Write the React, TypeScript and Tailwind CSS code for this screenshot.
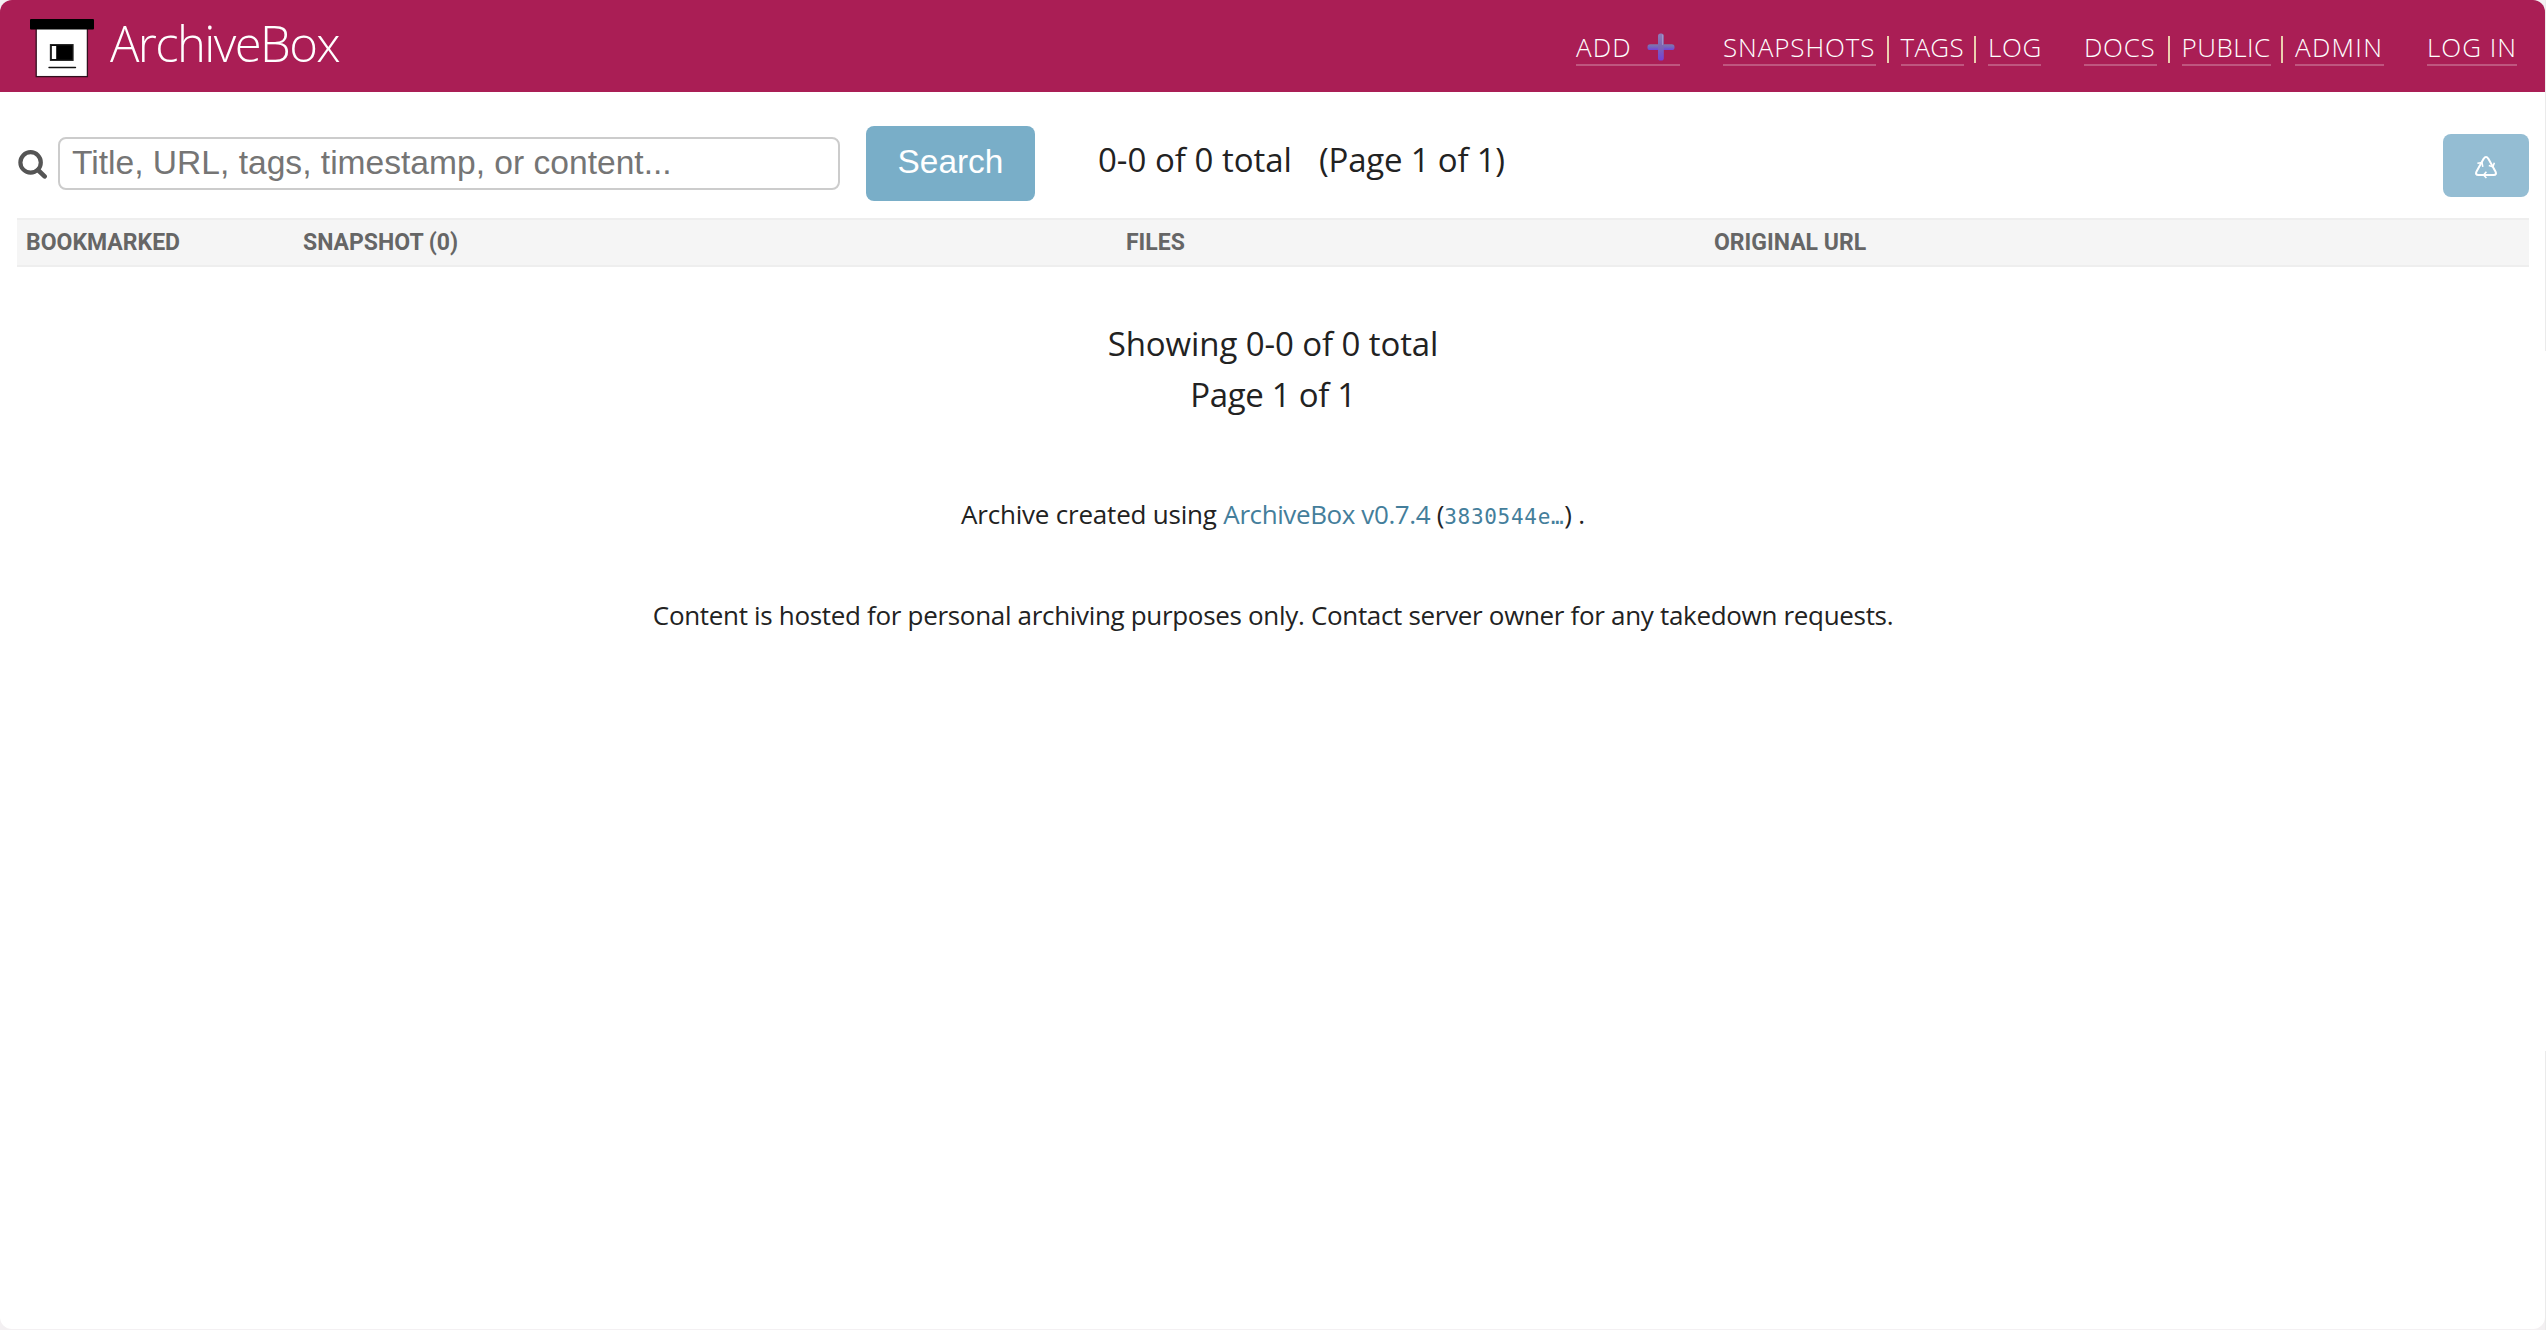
type NavLink = { label: string; box: string };

const snapshotLinks: NavLink[] = [
  { label: "SNAPSHOTS", box: "w-[153px] tracking-[0.9px]" },
  { label: "TAGS", box: "w-[63px] tracking-[0.3px]" },
  { label: "LOG", box: "w-[53px] tracking-[0.6px]" },
];

const siteLinks: NavLink[] = [
  { label: "DOCS", box: "w-[73px] tracking-[0.7px]" },
  { label: "PUBLIC", box: "w-[89px] tracking-[0.5px]" },
  { label: "ADMIN", box: "w-[89px] tracking-[1.3px]" },
];

const columns = [
  { label: "BOOKMARKED", width: "w-[277px]" },
  { label: "SNAPSHOT (0)", width: "w-[823px]" },
  { label: "FILES", width: "w-[588px]" },
  { label: "ORIGINAL URL", width: "flex-1" },
];

const linkClasses =
  "block h-9 border-b-2 border-white/25 leading-[34px] whitespace-nowrap";

const Logo = () => (
  <svg width="66" height="62" viewBox="0 0 66 62" className="mt-[17px] shrink-0">
    <rect x="7.2" y="11" width="51.2" height="48.6" fill="#fff" stroke="#32101f" strokeWidth="1.3" />
    <rect x="1" y="2" width="64" height="10.4" rx="1" fill="#000" />
    <rect x="21.5" y="27.7" width="22.5" height="15.6" fill="#000" stroke="#222" strokeWidth="1.3" />
    <rect x="22.8" y="29" width="4.4" height="13" fill="#fff" />
    <path d="M20 50.5H46.5" stroke="#111" strokeWidth="1.4" strokeLinecap="round" />
  </svg>
);

const PlusIcon = () => (
  <svg width="28" height="28" viewBox="0 0 28 28" className="shrink-0">
    <defs>
      <linearGradient id="plus" x1="0" y1="0" x2="0" y2="1">
        <stop offset="0" stopColor="#8f7bb8" />
        <stop offset="0.5" stopColor="#7b66b4" />
        <stop offset="1" stopColor="#7440d8" />
      </linearGradient>
      <linearGradient id="plus-bar" x1="0" y1="0" x2="0" y2="1">
        <stop offset="0" stopColor="#7d79ac" />
        <stop offset="0.5" stopColor="#7763bd" />
        <stop offset="1" stopColor="#7240dc" />
      </linearGradient>
    </defs>
    <rect x="0.5" y="11.3" width="27" height="5.8" rx="2.6" fill="url(#plus-bar)" />
    <rect x="11" y="0.5" width="5.8" height="27" rx="2.6" fill="url(#plus)" />
    <path d="M15.6 2v9.5" stroke="#a79aca" strokeWidth="0.9" strokeLinecap="round" />
  </svg>
);

const SearchIcon = () => (
  <svg width="30" height="30" viewBox="0 0 30 30" className="mt-[57px] shrink-0">
    <circle cx="12.6" cy="13.4" r="10.2" fill="none" stroke="#555" strokeWidth="4.2" />
    <path d="M20 21L26.6 27.4" stroke="#555" strokeWidth="4.6" strokeLinecap="round" />
  </svg>
);

const RecycleIcon = () => (
  <svg width="22" height="23" viewBox="0 0 22 23" fill="none" stroke="#fff">
    <path
      d="M8.6 2.8Q11 -0.6 13.4 2.8L20.6 15.8Q21.9 18.8 18.6 19H3.4Q0.1 18.8 1.4 15.8Z"
      strokeWidth="2"
      strokeLinejoin="round"
    />
    <path
      d="M2.4 7.3L7 6.6L7.8 10.8M13.8 9.6L17.9 10.8L19.4 6.8M11.4 15.8L8.6 19L11.4 22"
      strokeWidth="1.6"
    />
  </svg>
);

const NavGroup = ({ links }: { links: NavLink[] }) => (
  <div className="flex">
    {links.map((link, i) => (
      <div key={link.label} className="flex">
        {i > 0 && (
          <span className="mt-1.5 mr-3 ml-[10.5px] h-[27px] w-0.5 bg-[#ebcfae]" />
        )}
        <a href="#" className={`${linkClasses} ${link.box}`}>
          {link.label}
        </a>
      </div>
    ))}
  </div>
);

const App: React.FC = () => {
  return (
    <div className="flex h-[1330px] w-[2546px] overflow-hidden bg-[#f3f0f2] font-['Open_Sans',sans-serif] text-[#222]">
      <div className="h-[1329px] w-[2545px] overflow-hidden rounded-xl bg-white">
        {/* Header */}
        <header className="flex h-[92px] items-start bg-[#aa1e55] pr-7 pl-[29px] font-light text-white">
          <Logo />
          <a href="#" className="ml-[15px] text-[49px] leading-[86px] tracking-[-1.6px]">
            ArchiveBox
          </a>
          <nav className="mt-[30px] ml-auto flex gap-[43px] text-[26px]">
            <a href="#" className={`${linkClasses} flex w-[104px] items-center tracking-[1.1px]`}>
              ADD
              <span className="ml-auto pr-[5px]">
                <PlusIcon />
              </span>
            </a>
            <NavGroup links={snapshotLinks} />
            <NavGroup links={siteLinks} />
            <a href="#" className={`${linkClasses} w-[90px] tracking-[1px]`}>
              LOG IN
            </a>
          </nav>
        </header>

        {/* Search toolbar */}
        <div className="flex h-[126px] items-start pr-4 pl-[18px]">
          <SearchIcon />
          <input
            type="text"
            placeholder="Title, URL, tags, timestamp, or content..."
            className="mt-[45px] ml-2.5 h-[53px] w-[782px] rounded-lg border-2 border-[#ccc] pb-0.5 pl-3 font-['Liberation_Sans',sans-serif] text-[33.6px] placeholder:text-[#757575]"
          />
          <button className="mt-[34px] ml-[26px] h-[75px] w-[169px] rounded-lg bg-[#79aec8] pb-0.5 font-['Liberation_Sans',sans-serif] text-[33.4px] text-white">
            Search
          </button>
          <div className="mt-[43px] ml-[63px] flex gap-[27px] text-[33px] leading-[50px] whitespace-nowrap">
            <span>0-0 of 0 total</span>
            <span className="tracking-[-0.2px]">(Page 1 of 1)</span>
          </div>
          <button className="mt-[42px] ml-auto flex h-[63px] w-[86px] items-center justify-center rounded-lg bg-[#94bdd3] pt-1">
            <RecycleIcon />
          </button>
        </div>

        {/* Snapshot table */}
        <div className="mr-4 ml-[17px] flex h-[49px] items-center border-y-2 border-[#eee] bg-[#f5f5f5] pt-0.5 pl-[9px] font-['Roboto',sans-serif] text-[23px] font-bold text-[#666]">
          {columns.map((column) => (
            <div key={column.label} className={column.width}>
              {column.label}
            </div>
          ))}
        </div>

        {/* Pagination summary */}
        <div className="mt-[51px] pl-px text-center text-[33px] leading-[51px]">
          <p className="tracking-[-0.1px]">Showing 0-0 of 0 total</p>
          <p className="tracking-[-0.3px]">Page 1 of 1</p>
        </div>

        {/* Footer */}
        <footer className="mt-[74px] pl-px text-center text-[26px] leading-[40px]">
          <p className="tracking-[-0.2px]">
            Archive created using{" "}
            <a href="#" className="tracking-[-0.4px] text-[#447e9b]">
              ArchiveBox v0.7.4
            </a>{" "}
            (
            <a
              href="#"
              className="font-['DejaVu_Sans_Mono',monospace] text-[21px] leading-none tracking-[0.7px] text-[#447e9b]"
            >
              3830544e…
            </a>
            ) .
          </p>
          <p className="mt-[61px] tracking-[-0.32px]">
            Content is hosted for personal archiving purposes only. Contact
            server owner for any takedown requests.
          </p>
        </footer>
      </div>

      {/* Window edge */}
      <div className="flex w-px flex-col">
        <div className="h-[351px] bg-[#ebebeb]" />
        <div className="h-[700px] bg-white" />
        <div className="flex-1 bg-[#ebebeb]" />
      </div>
    </div>
  );
};

export default App;
